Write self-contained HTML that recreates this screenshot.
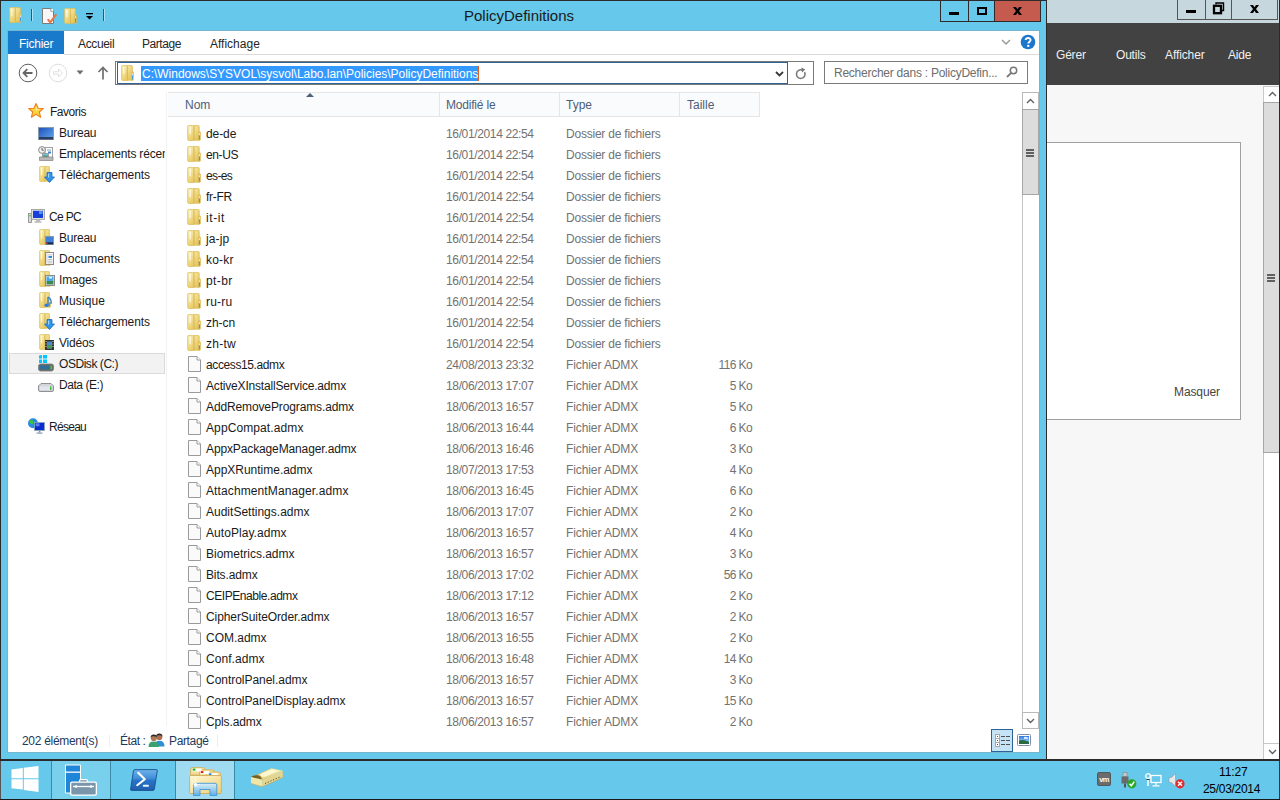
<!DOCTYPE html>
<html><head><meta charset="utf-8">
<style>
*{box-sizing:border-box}
html,body{margin:0;padding:0;width:1280px;height:800px;overflow:hidden;background:#66c8ea;font-family:"Liberation Sans",sans-serif;}
.a{position:absolute}
.ic{position:absolute;overflow:visible}
.t{position:absolute;white-space:nowrap;font-size:12px;line-height:14px}
.n{position:absolute;left:206px;white-space:nowrap;font-size:12px;line-height:14px;color:#1a1a1a;letter-spacing:-0.18px}
.d{position:absolute;left:446px;white-space:nowrap;font-size:12px;line-height:14px;color:#727272;letter-spacing:-0.36px}
.y{position:absolute;left:566px;white-space:nowrap;font-size:12px;line-height:14px;color:#727272;letter-spacing:-0.1px}
.s{position:absolute;right:528px;white-space:nowrap;font-size:12px;line-height:14px;color:#727272;letter-spacing:-0.6px;text-align:right}
.nv{position:absolute;white-space:nowrap;font-size:12px;line-height:14px;color:#1a1a1a;letter-spacing:-0.18px}
#scr{position:relative;width:1280px;height:800px;overflow:hidden}
</style></head><body><div id="scr">
<svg width="0" height="0" style="position:absolute">
<defs>
<linearGradient id="gfb" x1="0" y1="0" x2="0.6" y2="1"><stop offset="0" stop-color="#f8eaa4"/><stop offset="1" stop-color="#e6c45a"/></linearGradient>
<linearGradient id="gff" x1="0" y1="0" x2="0.5" y2="1"><stop offset="0" stop-color="#fcf4c4"/><stop offset="1" stop-color="#ebcd68"/></linearGradient>
<linearGradient id="gdesk" x1="0" y1="0" x2="1" y2="1"><stop offset="0" stop-color="#1d4fb8"/><stop offset="1" stop-color="#63a8f0"/></linearGradient>
</defs>
</svg>

<!-- Explorer window frame -->
<div class="a" style="left:0;top:0;width:1047px;height:761px;background:#66c8ea;border-left:1px solid #2a2a2a;border-top:1px solid #2a2a2a;border-right:1px solid #2a2a2a"></div>
<div class="a" style="left:7px;top:30px;width:1033px;height:723px;background:#fff;border:1px solid #74b6cc"></div>

<!-- quick access toolbar -->
<svg class="ic" style="left:9px;top:7px" width="13" height="16" viewBox="0 0 14 16" preserveAspectRatio="none">
 <path d="M6 0.6 H11.6 Q12.2 0.6 12.2 1.2 V15.2 H6 Z" fill="url(#gfb)" stroke="#dcbb58" stroke-width="0.8"/>
 <path d="M11.8 6.8 H13 Q13.5 6.8 13.5 7.3 V14.6 Q13.5 15.2 12.9 15.2 H11.8 Z" fill="#e8c860" stroke="#d9b550" stroke-width="0.6"/>
 <rect x="11.9" y="10.2" width="1" height="4.3" fill="#3a9ae8"/>
 <rect x="11.9" y="8.5" width="1" height="1.7" fill="#e8f0f8"/>
 <path d="M0.7 1.2 Q0.7 0.6 1.3 0.6 H5.5 Q6.8 0.6 6.8 1.8 V15.5 H2.2 Q0.7 15.5 0.7 14.2 Z" fill="url(#gff)" stroke="#dcbf5e" stroke-width="0.8"/>
 <path d="M2.6 1.6 L3.6 2.2 V9.2 L2.6 9.2 Z" fill="#fff"/>
 <rect x="6.6" y="1.4" width="1" height="13.5" fill="#cfb05a" opacity="0.55"/>
</svg>
<div class="a" style="left:31px;top:9px;width:1px;height:12px;background:#2d5a6c"></div>
<div class="a" style="left:32px;top:9px;width:1px;height:12px;background:#a8e2f5"></div>
<svg class="ic" style="left:42px;top:8px" width="16" height="16" viewBox="0 0 16 16">
 <path d="M0.5 0.5 H8.8 L11.5 3.2 V15.5 H0.5 Z" fill="#f7f7f7" stroke="#7a7a7a" stroke-width="1"/>
 <path d="M8.8 0.5 V3.2 H11.5" fill="#fff" stroke="#7a7a7a" stroke-width="0.8"/>
 <circle cx="10.2" cy="1.9" r="0.9" fill="#fff"/>
 <path d="M6.3 11.8 L8.3 14.3 L13.8 6.8" fill="none" stroke="#e8764a" stroke-width="2.1" stroke-linecap="round" stroke-linejoin="round"/>
</svg>
<svg class="ic" style="left:64px;top:8px" width="13" height="16" viewBox="0 0 14 16" preserveAspectRatio="none">
 <path d="M6 0.6 H11.6 Q12.2 0.6 12.2 1.2 V15.2 H6 Z" fill="url(#gfb)" stroke="#dcbb58" stroke-width="0.8"/>
 <path d="M11.8 6.8 H13 Q13.5 6.8 13.5 7.3 V14.6 Q13.5 15.2 12.9 15.2 H11.8 Z" fill="#e8c860" stroke="#d9b550" stroke-width="0.6"/>
 <rect x="11.9" y="10.2" width="1" height="4.3" fill="#3a9ae8"/>
 <rect x="11.9" y="8.5" width="1" height="1.7" fill="#e8f0f8"/>
 <path d="M0.7 1.2 Q0.7 0.6 1.3 0.6 H5.5 Q6.8 0.6 6.8 1.8 V15.5 H2.2 Q0.7 15.5 0.7 14.2 Z" fill="url(#gff)" stroke="#dcbf5e" stroke-width="0.8"/>
 <path d="M2.6 1.6 L3.6 2.2 V9.2 L2.6 9.2 Z" fill="#fff"/>
 <rect x="6.6" y="1.4" width="1" height="13.5" fill="#cfb05a" opacity="0.55"/>
</svg>
<svg class="ic" style="left:86px;top:13px" width="8" height="8" viewBox="0 0 8 8"><rect x="0" y="0" width="7" height="1.3" fill="#000"/><path d="M0 3 H7 L3.5 6.5 Z" fill="#000"/></svg>
<div class="a" style="left:103px;top:9px;width:1px;height:12px;background:#2d5a6c"></div>
<div class="a" style="left:104px;top:9px;width:1px;height:12px;background:#a8e2f5"></div>

<!-- title -->
<div class="t" style="left:464px;top:7px;font-size:15px;line-height:18px;color:#1a1a1a">PolicyDefinitions</div>

<!-- window buttons -->
<div class="a" style="left:940px;top:0;width:29px;height:22px;border:1px solid #2e2a2a;background:#66c8ea"></div>
<div class="a" style="left:949px;top:12px;width:10px;height:3px;background:#000"></div>
<div class="a" style="left:968px;top:0;width:27px;height:22px;border:1px solid #2e2a2a;background:#66c8ea"></div>
<div class="a" style="left:977px;top:7px;width:10px;height:8px;border:2px solid #000"></div>
<div class="a" style="left:994px;top:0;width:47px;height:22px;border:1px solid #2e2a2a;background:#c55a4f"></div>
<svg class="ic" style="left:1013px;top:7px" width="9" height="8" viewBox="0 0 9 8"><path d="M0 0 H3 L4.5 2.3 L6 0 H9 L6 4 L9 8 H6 L4.5 5.7 L3 8 H0 L3 4 Z" fill="#000"/></svg>

<!-- ribbon -->
<div class="a" style="left:8px;top:31px;width:56px;height:23px;background:#1979ca"></div>
<div class="t" style="left:19px;top:37px;color:#fff;letter-spacing:-0.25px">Fichier</div>
<div class="t" style="left:78px;top:37px;color:#262626;letter-spacing:-0.35px">Accueil</div>
<div class="t" style="left:142px;top:37px;color:#262626;letter-spacing:-0.45px">Partage</div>
<div class="t" style="left:210px;top:37px;color:#262626">Affichage</div>
<div class="a" style="left:64px;top:54px;width:975px;height:1px;background:#dadbdc"></div>
<svg class="ic" style="left:1001px;top:39px" width="10" height="6" viewBox="0 0 10 6"><path d="M1 1 L5 5 L9 1" fill="none" stroke="#9a9a9a" stroke-width="1.5"/></svg>
<svg class="ic" style="left:1020px;top:34px" width="16" height="16" viewBox="0 0 16 16"><circle cx="8" cy="8" r="7.3" fill="#1b76cc"/><path d="M5.6 6 C5.6 3.3 10.6 3.3 10.6 6 C10.6 7.6 8.3 7.8 8.3 9.6" fill="none" stroke="#fff" stroke-width="1.8"/><rect x="7.2" y="10.9" width="2.1" height="2" fill="#fff"/></svg>

<!-- nav buttons -->
<svg class="ic" style="left:18px;top:63px" width="20" height="20" viewBox="0 0 20 20"><circle cx="10" cy="10" r="8.8" fill="none" stroke="#606060" stroke-width="1"/><path d="M5.5 10 H14.5 M9.3 6.2 L5.5 10 L9.3 13.8" fill="none" stroke="#666" stroke-width="1.8"/></svg>
<svg class="ic" style="left:48px;top:63px" width="20" height="20" viewBox="0 0 20 20"><circle cx="10" cy="10" r="8.8" fill="none" stroke="#dedede" stroke-width="1"/><path d="M5.5 8.8 H10.5 V6 L14.5 10 L10.5 14 V11.2 H5.5 Z" fill="none" stroke="#dcdcdc" stroke-width="0.9"/></svg>
<svg class="ic" style="left:76px;top:70px" width="8" height="5" viewBox="0 0 8 5"><path d="M0.5 0.5 H7.5 L4 4.5 Z" fill="#6d6d6d"/></svg>
<svg class="ic" style="left:97px;top:66px" width="12" height="14" viewBox="0 0 12 14"><path d="M6 13.5 V1.5 M1.5 6 L6 1.5 L10.5 6" fill="none" stroke="#707070" stroke-width="1.7"/></svg>

<!-- address bar -->
<div class="a" style="left:115px;top:61px;width:699px;height:24px;border:1px solid #7a7a7a;background:#fff"></div>
<div class="a" style="left:117px;top:62px;width:671px;height:22px;border:1px solid #2e6493"></div>
<svg class="ic" style="left:121px;top:65px" width="13" height="16" viewBox="0 0 14 16" preserveAspectRatio="none">
 <path d="M6 0.6 H11.6 Q12.2 0.6 12.2 1.2 V15.2 H6 Z" fill="url(#gfb)" stroke="#dcbb58" stroke-width="0.8"/>
 <path d="M11.8 6.8 H13 Q13.5 6.8 13.5 7.3 V14.6 Q13.5 15.2 12.9 15.2 H11.8 Z" fill="#e8c860" stroke="#d9b550" stroke-width="0.6"/>
 <rect x="11.9" y="10.2" width="1" height="4.3" fill="#3a9ae8"/>
 <rect x="11.9" y="8.5" width="1" height="1.7" fill="#e8f0f8"/>
 <path d="M0.7 1.2 Q0.7 0.6 1.3 0.6 H5.5 Q6.8 0.6 6.8 1.8 V15.5 H2.2 Q0.7 15.5 0.7 14.2 Z" fill="url(#gff)" stroke="#dcbf5e" stroke-width="0.8"/>
 <path d="M2.6 1.6 L3.6 2.2 V9.2 L2.6 9.2 Z" fill="#fff"/>
 <rect x="6.6" y="1.4" width="1" height="13.5" fill="#cfb05a" opacity="0.55"/>
</svg>
<div class="a" style="left:141px;top:66px;width:338px;height:15px;background:#3399ff"></div>
<div class="t" style="left:142px;top:67px;color:#fff;letter-spacing:-0.02px">C:\Windows\SYSVOL\sysvol\Labo.lan\Policies\PolicyDefinitions</div>
<div class="a" style="left:478px;top:66px;width:1px;height:15px;background:#e06020"></div>
<svg class="ic" style="left:775px;top:71px" width="9" height="6" viewBox="0 0 9 6"><path d="M1 1 L4.5 4.5 L8 1" fill="none" stroke="#3a3a3a" stroke-width="1.8"/></svg>
<svg class="ic" style="left:795px;top:67px" width="12" height="13" viewBox="0 0 12 13"><path d="M9.6 5.2 A4.3 4.3 0 1 1 7.5 3.2" fill="none" stroke="#777" stroke-width="1.5"/><path d="M6.3 0.5 L10.3 2.6 L7 5.6 Z" fill="#777"/></svg>
<!-- search -->
<div class="a" style="left:824px;top:61px;width:204px;height:23px;border:1px solid #7a7a7a;background:#fff"></div>
<div class="t" style="left:834px;top:66px;color:#6d6d6d;letter-spacing:-0.25px">Rechercher dans : PolicyDefin...</div>
<svg class="ic" style="left:1006px;top:66px" width="12" height="12" viewBox="0 0 12 12"><circle cx="7.5" cy="4.5" r="3.2" fill="none" stroke="#777" stroke-width="1.5"/><path d="M5.2 6.8 L1 11" stroke="#777" stroke-width="1.8"/></svg>

<!-- file list header -->
<div class="a" style="left:168px;top:92px;width:592px;height:25px;background:#fafbfc;border-top:1px solid #e5e5e5;border-bottom:1px solid #e5e5e5;border-right:1px solid #e5e5e5"></div>
<div class="a" style="left:439px;top:93px;width:1px;height:23px;background:#e5e5e5"></div>
<div class="a" style="left:559px;top:93px;width:1px;height:23px;background:#e5e5e5"></div>
<div class="a" style="left:679px;top:93px;width:1px;height:23px;background:#e5e5e5"></div>
<svg class="ic" style="left:306px;top:93px" width="8" height="4" viewBox="0 0 8 4"><path d="M0 4 L4 0 L8 4 Z" fill="#4c607a"/></svg>
<div class="t" style="left:185px;top:98px;color:#4c607a">Nom</div>
<div class="t" style="left:446px;top:98px;color:#4c607a;letter-spacing:-0.2px">Modifié le</div>
<div class="t" style="left:566px;top:98px;color:#4c607a">Type</div>
<div class="t" style="left:687px;top:98px;color:#4c607a">Taille</div>

<!-- nav separator -->
<div class="a" style="left:166px;top:92px;width:1px;height:634px;background:#f2f2f2"></div>

<!-- file rows -->
<svg class="ic" style="left:187px;top:125px" width="14" height="16" viewBox="0 0 14 16" preserveAspectRatio="none">
 <path d="M6 0.6 H11.6 Q12.2 0.6 12.2 1.2 V15.2 H6 Z" fill="url(#gfb)" stroke="#dcbb58" stroke-width="0.8"/>
 <path d="M11.8 6.8 H13 Q13.5 6.8 13.5 7.3 V14.6 Q13.5 15.2 12.9 15.2 H11.8 Z" fill="#e8c860" stroke="#d9b550" stroke-width="0.6"/>
 <rect x="11.9" y="10.2" width="1" height="4.3" fill="#3a9ae8"/>
 <rect x="11.9" y="8.5" width="1" height="1.7" fill="#e8f0f8"/>
 <path d="M0.7 1.2 Q0.7 0.6 1.3 0.6 H5.5 Q6.8 0.6 6.8 1.8 V15.5 H2.2 Q0.7 15.5 0.7 14.2 Z" fill="url(#gff)" stroke="#dcbf5e" stroke-width="0.8"/>
 <path d="M2.6 1.6 L3.6 2.2 V9.2 L2.6 9.2 Z" fill="#fff"/>
 <rect x="6.6" y="1.4" width="1" height="13.5" fill="#cfb05a" opacity="0.55"/>
</svg><div class="n" style="top:127px;letter-spacing:-0.091px">de-de</div><div class="d" style="top:127px">16/01/2014 22:54</div><div class="y" style="top:127px;letter-spacing:-0.22px">Dossier de fichiers</div>
<svg class="ic" style="left:187px;top:146px" width="14" height="16" viewBox="0 0 14 16" preserveAspectRatio="none">
 <path d="M6 0.6 H11.6 Q12.2 0.6 12.2 1.2 V15.2 H6 Z" fill="url(#gfb)" stroke="#dcbb58" stroke-width="0.8"/>
 <path d="M11.8 6.8 H13 Q13.5 6.8 13.5 7.3 V14.6 Q13.5 15.2 12.9 15.2 H11.8 Z" fill="#e8c860" stroke="#d9b550" stroke-width="0.6"/>
 <rect x="11.9" y="10.2" width="1" height="4.3" fill="#3a9ae8"/>
 <rect x="11.9" y="8.5" width="1" height="1.7" fill="#e8f0f8"/>
 <path d="M0.7 1.2 Q0.7 0.6 1.3 0.6 H5.5 Q6.8 0.6 6.8 1.8 V15.5 H2.2 Q0.7 15.5 0.7 14.2 Z" fill="url(#gff)" stroke="#dcbf5e" stroke-width="0.8"/>
 <path d="M2.6 1.6 L3.6 2.2 V9.2 L2.6 9.2 Z" fill="#fff"/>
 <rect x="6.6" y="1.4" width="1" height="13.5" fill="#cfb05a" opacity="0.55"/>
</svg><div class="n" style="top:148px;letter-spacing:-0.383px">en-US</div><div class="d" style="top:148px">16/01/2014 22:54</div><div class="y" style="top:148px;letter-spacing:-0.22px">Dossier de fichiers</div>
<svg class="ic" style="left:187px;top:167px" width="14" height="16" viewBox="0 0 14 16" preserveAspectRatio="none">
 <path d="M6 0.6 H11.6 Q12.2 0.6 12.2 1.2 V15.2 H6 Z" fill="url(#gfb)" stroke="#dcbb58" stroke-width="0.8"/>
 <path d="M11.8 6.8 H13 Q13.5 6.8 13.5 7.3 V14.6 Q13.5 15.2 12.9 15.2 H11.8 Z" fill="#e8c860" stroke="#d9b550" stroke-width="0.6"/>
 <rect x="11.9" y="10.2" width="1" height="4.3" fill="#3a9ae8"/>
 <rect x="11.9" y="8.5" width="1" height="1.7" fill="#e8f0f8"/>
 <path d="M0.7 1.2 Q0.7 0.6 1.3 0.6 H5.5 Q6.8 0.6 6.8 1.8 V15.5 H2.2 Q0.7 15.5 0.7 14.2 Z" fill="url(#gff)" stroke="#dcbf5e" stroke-width="0.8"/>
 <path d="M2.6 1.6 L3.6 2.2 V9.2 L2.6 9.2 Z" fill="#fff"/>
 <rect x="6.6" y="1.4" width="1" height="13.5" fill="#cfb05a" opacity="0.55"/>
</svg><div class="n" style="top:169px;letter-spacing:-0.619px">es-es</div><div class="d" style="top:169px">16/01/2014 22:54</div><div class="y" style="top:169px;letter-spacing:-0.22px">Dossier de fichiers</div>
<svg class="ic" style="left:187px;top:188px" width="14" height="16" viewBox="0 0 14 16" preserveAspectRatio="none">
 <path d="M6 0.6 H11.6 Q12.2 0.6 12.2 1.2 V15.2 H6 Z" fill="url(#gfb)" stroke="#dcbb58" stroke-width="0.8"/>
 <path d="M11.8 6.8 H13 Q13.5 6.8 13.5 7.3 V14.6 Q13.5 15.2 12.9 15.2 H11.8 Z" fill="#e8c860" stroke="#d9b550" stroke-width="0.6"/>
 <rect x="11.9" y="10.2" width="1" height="4.3" fill="#3a9ae8"/>
 <rect x="11.9" y="8.5" width="1" height="1.7" fill="#e8f0f8"/>
 <path d="M0.7 1.2 Q0.7 0.6 1.3 0.6 H5.5 Q6.8 0.6 6.8 1.8 V15.5 H2.2 Q0.7 15.5 0.7 14.2 Z" fill="url(#gff)" stroke="#dcbf5e" stroke-width="0.8"/>
 <path d="M2.6 1.6 L3.6 2.2 V9.2 L2.6 9.2 Z" fill="#fff"/>
 <rect x="6.6" y="1.4" width="1" height="13.5" fill="#cfb05a" opacity="0.55"/>
</svg><div class="n" style="top:190px;letter-spacing:-0.286px">fr-FR</div><div class="d" style="top:190px">16/01/2014 22:54</div><div class="y" style="top:190px;letter-spacing:-0.22px">Dossier de fichiers</div>
<svg class="ic" style="left:187px;top:209px" width="14" height="16" viewBox="0 0 14 16" preserveAspectRatio="none">
 <path d="M6 0.6 H11.6 Q12.2 0.6 12.2 1.2 V15.2 H6 Z" fill="url(#gfb)" stroke="#dcbb58" stroke-width="0.8"/>
 <path d="M11.8 6.8 H13 Q13.5 6.8 13.5 7.3 V14.6 Q13.5 15.2 12.9 15.2 H11.8 Z" fill="#e8c860" stroke="#d9b550" stroke-width="0.6"/>
 <rect x="11.9" y="10.2" width="1" height="4.3" fill="#3a9ae8"/>
 <rect x="11.9" y="8.5" width="1" height="1.7" fill="#e8f0f8"/>
 <path d="M0.7 1.2 Q0.7 0.6 1.3 0.6 H5.5 Q6.8 0.6 6.8 1.8 V15.5 H2.2 Q0.7 15.5 0.7 14.2 Z" fill="url(#gff)" stroke="#dcbf5e" stroke-width="0.8"/>
 <path d="M2.6 1.6 L3.6 2.2 V9.2 L2.6 9.2 Z" fill="#fff"/>
 <rect x="6.6" y="1.4" width="1" height="13.5" fill="#cfb05a" opacity="0.55"/>
</svg><div class="n" style="top:211px;letter-spacing:0.6px">it-it</div><div class="d" style="top:211px">16/01/2014 22:54</div><div class="y" style="top:211px;letter-spacing:-0.22px">Dossier de fichiers</div>
<svg class="ic" style="left:187px;top:230px" width="14" height="16" viewBox="0 0 14 16" preserveAspectRatio="none">
 <path d="M6 0.6 H11.6 Q12.2 0.6 12.2 1.2 V15.2 H6 Z" fill="url(#gfb)" stroke="#dcbb58" stroke-width="0.8"/>
 <path d="M11.8 6.8 H13 Q13.5 6.8 13.5 7.3 V14.6 Q13.5 15.2 12.9 15.2 H11.8 Z" fill="#e8c860" stroke="#d9b550" stroke-width="0.6"/>
 <rect x="11.9" y="10.2" width="1" height="4.3" fill="#3a9ae8"/>
 <rect x="11.9" y="8.5" width="1" height="1.7" fill="#e8f0f8"/>
 <path d="M0.7 1.2 Q0.7 0.6 1.3 0.6 H5.5 Q6.8 0.6 6.8 1.8 V15.5 H2.2 Q0.7 15.5 0.7 14.2 Z" fill="url(#gff)" stroke="#dcbf5e" stroke-width="0.8"/>
 <path d="M2.6 1.6 L3.6 2.2 V9.2 L2.6 9.2 Z" fill="#fff"/>
 <rect x="6.6" y="1.4" width="1" height="13.5" fill="#cfb05a" opacity="0.55"/>
</svg><div class="n" style="top:232px;letter-spacing:0.102px">ja-jp</div><div class="d" style="top:232px">16/01/2014 22:54</div><div class="y" style="top:232px;letter-spacing:-0.22px">Dossier de fichiers</div>
<svg class="ic" style="left:187px;top:251px" width="14" height="16" viewBox="0 0 14 16" preserveAspectRatio="none">
 <path d="M6 0.6 H11.6 Q12.2 0.6 12.2 1.2 V15.2 H6 Z" fill="url(#gfb)" stroke="#dcbb58" stroke-width="0.8"/>
 <path d="M11.8 6.8 H13 Q13.5 6.8 13.5 7.3 V14.6 Q13.5 15.2 12.9 15.2 H11.8 Z" fill="#e8c860" stroke="#d9b550" stroke-width="0.6"/>
 <rect x="11.9" y="10.2" width="1" height="4.3" fill="#3a9ae8"/>
 <rect x="11.9" y="8.5" width="1" height="1.7" fill="#e8f0f8"/>
 <path d="M0.7 1.2 Q0.7 0.6 1.3 0.6 H5.5 Q6.8 0.6 6.8 1.8 V15.5 H2.2 Q0.7 15.5 0.7 14.2 Z" fill="url(#gff)" stroke="#dcbf5e" stroke-width="0.8"/>
 <path d="M2.6 1.6 L3.6 2.2 V9.2 L2.6 9.2 Z" fill="#fff"/>
 <rect x="6.6" y="1.4" width="1" height="13.5" fill="#cfb05a" opacity="0.55"/>
</svg><div class="n" style="top:253px;letter-spacing:0.186px">ko-kr</div><div class="d" style="top:253px">16/01/2014 22:54</div><div class="y" style="top:253px;letter-spacing:-0.22px">Dossier de fichiers</div>
<svg class="ic" style="left:187px;top:272px" width="14" height="16" viewBox="0 0 14 16" preserveAspectRatio="none">
 <path d="M6 0.6 H11.6 Q12.2 0.6 12.2 1.2 V15.2 H6 Z" fill="url(#gfb)" stroke="#dcbb58" stroke-width="0.8"/>
 <path d="M11.8 6.8 H13 Q13.5 6.8 13.5 7.3 V14.6 Q13.5 15.2 12.9 15.2 H11.8 Z" fill="#e8c860" stroke="#d9b550" stroke-width="0.6"/>
 <rect x="11.9" y="10.2" width="1" height="4.3" fill="#3a9ae8"/>
 <rect x="11.9" y="8.5" width="1" height="1.7" fill="#e8f0f8"/>
 <path d="M0.7 1.2 Q0.7 0.6 1.3 0.6 H5.5 Q6.8 0.6 6.8 1.8 V15.5 H2.2 Q0.7 15.5 0.7 14.2 Z" fill="url(#gff)" stroke="#dcbf5e" stroke-width="0.8"/>
 <path d="M2.6 1.6 L3.6 2.2 V9.2 L2.6 9.2 Z" fill="#fff"/>
 <rect x="6.6" y="1.4" width="1" height="13.5" fill="#cfb05a" opacity="0.55"/>
</svg><div class="n" style="top:274px;letter-spacing:0.423px">pt-br</div><div class="d" style="top:274px">16/01/2014 22:54</div><div class="y" style="top:274px;letter-spacing:-0.22px">Dossier de fichiers</div>
<svg class="ic" style="left:187px;top:293px" width="14" height="16" viewBox="0 0 14 16" preserveAspectRatio="none">
 <path d="M6 0.6 H11.6 Q12.2 0.6 12.2 1.2 V15.2 H6 Z" fill="url(#gfb)" stroke="#dcbb58" stroke-width="0.8"/>
 <path d="M11.8 6.8 H13 Q13.5 6.8 13.5 7.3 V14.6 Q13.5 15.2 12.9 15.2 H11.8 Z" fill="#e8c860" stroke="#d9b550" stroke-width="0.6"/>
 <rect x="11.9" y="10.2" width="1" height="4.3" fill="#3a9ae8"/>
 <rect x="11.9" y="8.5" width="1" height="1.7" fill="#e8f0f8"/>
 <path d="M0.7 1.2 Q0.7 0.6 1.3 0.6 H5.5 Q6.8 0.6 6.8 1.8 V15.5 H2.2 Q0.7 15.5 0.7 14.2 Z" fill="url(#gff)" stroke="#dcbf5e" stroke-width="0.8"/>
 <path d="M2.6 1.6 L3.6 2.2 V9.2 L2.6 9.2 Z" fill="#fff"/>
 <rect x="6.6" y="1.4" width="1" height="13.5" fill="#cfb05a" opacity="0.55"/>
</svg><div class="n" style="top:295px;letter-spacing:0.191px">ru-ru</div><div class="d" style="top:295px">16/01/2014 22:54</div><div class="y" style="top:295px;letter-spacing:-0.22px">Dossier de fichiers</div>
<svg class="ic" style="left:187px;top:314px" width="14" height="16" viewBox="0 0 14 16" preserveAspectRatio="none">
 <path d="M6 0.6 H11.6 Q12.2 0.6 12.2 1.2 V15.2 H6 Z" fill="url(#gfb)" stroke="#dcbb58" stroke-width="0.8"/>
 <path d="M11.8 6.8 H13 Q13.5 6.8 13.5 7.3 V14.6 Q13.5 15.2 12.9 15.2 H11.8 Z" fill="#e8c860" stroke="#d9b550" stroke-width="0.6"/>
 <rect x="11.9" y="10.2" width="1" height="4.3" fill="#3a9ae8"/>
 <rect x="11.9" y="8.5" width="1" height="1.7" fill="#e8f0f8"/>
 <path d="M0.7 1.2 Q0.7 0.6 1.3 0.6 H5.5 Q6.8 0.6 6.8 1.8 V15.5 H2.2 Q0.7 15.5 0.7 14.2 Z" fill="url(#gff)" stroke="#dcbf5e" stroke-width="0.8"/>
 <path d="M2.6 1.6 L3.6 2.2 V9.2 L2.6 9.2 Z" fill="#fff"/>
 <rect x="6.6" y="1.4" width="1" height="13.5" fill="#cfb05a" opacity="0.55"/>
</svg><div class="n" style="top:316px;letter-spacing:-0.029px">zh-cn</div><div class="d" style="top:316px">16/01/2014 22:54</div><div class="y" style="top:316px;letter-spacing:-0.22px">Dossier de fichiers</div>
<svg class="ic" style="left:187px;top:335px" width="14" height="16" viewBox="0 0 14 16" preserveAspectRatio="none">
 <path d="M6 0.6 H11.6 Q12.2 0.6 12.2 1.2 V15.2 H6 Z" fill="url(#gfb)" stroke="#dcbb58" stroke-width="0.8"/>
 <path d="M11.8 6.8 H13 Q13.5 6.8 13.5 7.3 V14.6 Q13.5 15.2 12.9 15.2 H11.8 Z" fill="#e8c860" stroke="#d9b550" stroke-width="0.6"/>
 <rect x="11.9" y="10.2" width="1" height="4.3" fill="#3a9ae8"/>
 <rect x="11.9" y="8.5" width="1" height="1.7" fill="#e8f0f8"/>
 <path d="M0.7 1.2 Q0.7 0.6 1.3 0.6 H5.5 Q6.8 0.6 6.8 1.8 V15.5 H2.2 Q0.7 15.5 0.7 14.2 Z" fill="url(#gff)" stroke="#dcbf5e" stroke-width="0.8"/>
 <path d="M2.6 1.6 L3.6 2.2 V9.2 L2.6 9.2 Z" fill="#fff"/>
 <rect x="6.6" y="1.4" width="1" height="13.5" fill="#cfb05a" opacity="0.55"/>
</svg><div class="n" style="top:337px;letter-spacing:0.246px">zh-tw</div><div class="d" style="top:337px">16/01/2014 22:54</div><div class="y" style="top:337px;letter-spacing:-0.22px">Dossier de fichiers</div>
<svg class="ic" style="left:188px;top:356px" width="13" height="16" viewBox="0 0 13 16" preserveAspectRatio="none">
 <path d="M0.5 0.5 H9 L12.5 4 V15.5 H0.5 Z" fill="#fafafa" stroke="#9a9a9a" stroke-width="1"/>
 <path d="M9 0.5 V4 H12.5" fill="#fff" stroke="#9a9a9a" stroke-width="1"/>
</svg><div class="n" style="top:358px;letter-spacing:-0.394px">access15.admx</div><div class="d" style="top:358px">24/08/2013 23:32</div><div class="y" style="top:358px">Fichier ADMX</div><div class="s" style="top:358px">116 Ko</div>
<svg class="ic" style="left:188px;top:377px" width="13" height="16" viewBox="0 0 13 16" preserveAspectRatio="none">
 <path d="M0.5 0.5 H9 L12.5 4 V15.5 H0.5 Z" fill="#fafafa" stroke="#9a9a9a" stroke-width="1"/>
 <path d="M9 0.5 V4 H12.5" fill="#fff" stroke="#9a9a9a" stroke-width="1"/>
</svg><div class="n" style="top:379px;letter-spacing:-0.182px">ActiveXInstallService.admx</div><div class="d" style="top:379px">18/06/2013 17:07</div><div class="y" style="top:379px">Fichier ADMX</div><div class="s" style="top:379px">5 Ko</div>
<svg class="ic" style="left:188px;top:398px" width="13" height="16" viewBox="0 0 13 16" preserveAspectRatio="none">
 <path d="M0.5 0.5 H9 L12.5 4 V15.5 H0.5 Z" fill="#fafafa" stroke="#9a9a9a" stroke-width="1"/>
 <path d="M9 0.5 V4 H12.5" fill="#fff" stroke="#9a9a9a" stroke-width="1"/>
</svg><div class="n" style="top:400px;letter-spacing:-0.124px">AddRemovePrograms.admx</div><div class="d" style="top:400px">18/06/2013 16:57</div><div class="y" style="top:400px">Fichier ADMX</div><div class="s" style="top:400px">5 Ko</div>
<svg class="ic" style="left:188px;top:419px" width="13" height="16" viewBox="0 0 13 16" preserveAspectRatio="none">
 <path d="M0.5 0.5 H9 L12.5 4 V15.5 H0.5 Z" fill="#fafafa" stroke="#9a9a9a" stroke-width="1"/>
 <path d="M9 0.5 V4 H12.5" fill="#fff" stroke="#9a9a9a" stroke-width="1"/>
</svg><div class="n" style="top:421px;letter-spacing:0.104px">AppCompat.admx</div><div class="d" style="top:421px">18/06/2013 16:44</div><div class="y" style="top:421px">Fichier ADMX</div><div class="s" style="top:421px">6 Ko</div>
<svg class="ic" style="left:188px;top:440px" width="13" height="16" viewBox="0 0 13 16" preserveAspectRatio="none">
 <path d="M0.5 0.5 H9 L12.5 4 V15.5 H0.5 Z" fill="#fafafa" stroke="#9a9a9a" stroke-width="1"/>
 <path d="M9 0.5 V4 H12.5" fill="#fff" stroke="#9a9a9a" stroke-width="1"/>
</svg><div class="n" style="top:442px;letter-spacing:-0.128px">AppxPackageManager.admx</div><div class="d" style="top:442px">18/06/2013 16:46</div><div class="y" style="top:442px">Fichier ADMX</div><div class="s" style="top:442px">3 Ko</div>
<svg class="ic" style="left:188px;top:461px" width="13" height="16" viewBox="0 0 13 16" preserveAspectRatio="none">
 <path d="M0.5 0.5 H9 L12.5 4 V15.5 H0.5 Z" fill="#fafafa" stroke="#9a9a9a" stroke-width="1"/>
 <path d="M9 0.5 V4 H12.5" fill="#fff" stroke="#9a9a9a" stroke-width="1"/>
</svg><div class="n" style="top:463px;letter-spacing:-0.014px">AppXRuntime.admx</div><div class="d" style="top:463px">18/07/2013 17:53</div><div class="y" style="top:463px">Fichier ADMX</div><div class="s" style="top:463px">4 Ko</div>
<svg class="ic" style="left:188px;top:482px" width="13" height="16" viewBox="0 0 13 16" preserveAspectRatio="none">
 <path d="M0.5 0.5 H9 L12.5 4 V15.5 H0.5 Z" fill="#fafafa" stroke="#9a9a9a" stroke-width="1"/>
 <path d="M9 0.5 V4 H12.5" fill="#fff" stroke="#9a9a9a" stroke-width="1"/>
</svg><div class="n" style="top:484px;letter-spacing:0.11px">AttachmentManager.admx</div><div class="d" style="top:484px">18/06/2013 16:45</div><div class="y" style="top:484px">Fichier ADMX</div><div class="s" style="top:484px">6 Ko</div>
<svg class="ic" style="left:188px;top:503px" width="13" height="16" viewBox="0 0 13 16" preserveAspectRatio="none">
 <path d="M0.5 0.5 H9 L12.5 4 V15.5 H0.5 Z" fill="#fafafa" stroke="#9a9a9a" stroke-width="1"/>
 <path d="M9 0.5 V4 H12.5" fill="#fff" stroke="#9a9a9a" stroke-width="1"/>
</svg><div class="n" style="top:505px;letter-spacing:0.006px">AuditSettings.admx</div><div class="d" style="top:505px">18/06/2013 17:07</div><div class="y" style="top:505px">Fichier ADMX</div><div class="s" style="top:505px">2 Ko</div>
<svg class="ic" style="left:188px;top:524px" width="13" height="16" viewBox="0 0 13 16" preserveAspectRatio="none">
 <path d="M0.5 0.5 H9 L12.5 4 V15.5 H0.5 Z" fill="#fafafa" stroke="#9a9a9a" stroke-width="1"/>
 <path d="M9 0.5 V4 H12.5" fill="#fff" stroke="#9a9a9a" stroke-width="1"/>
</svg><div class="n" style="top:526px;letter-spacing:0.052px">AutoPlay.admx</div><div class="d" style="top:526px">18/06/2013 16:57</div><div class="y" style="top:526px">Fichier ADMX</div><div class="s" style="top:526px">4 Ko</div>
<svg class="ic" style="left:188px;top:545px" width="13" height="16" viewBox="0 0 13 16" preserveAspectRatio="none">
 <path d="M0.5 0.5 H9 L12.5 4 V15.5 H0.5 Z" fill="#fafafa" stroke="#9a9a9a" stroke-width="1"/>
 <path d="M9 0.5 V4 H12.5" fill="#fff" stroke="#9a9a9a" stroke-width="1"/>
</svg><div class="n" style="top:547px;letter-spacing:-0.013px">Biometrics.admx</div><div class="d" style="top:547px">18/06/2013 16:57</div><div class="y" style="top:547px">Fichier ADMX</div><div class="s" style="top:547px">3 Ko</div>
<svg class="ic" style="left:188px;top:566px" width="13" height="16" viewBox="0 0 13 16" preserveAspectRatio="none">
 <path d="M0.5 0.5 H9 L12.5 4 V15.5 H0.5 Z" fill="#fafafa" stroke="#9a9a9a" stroke-width="1"/>
 <path d="M9 0.5 V4 H12.5" fill="#fff" stroke="#9a9a9a" stroke-width="1"/>
</svg><div class="n" style="top:568px;letter-spacing:-0.132px">Bits.admx</div><div class="d" style="top:568px">18/06/2013 17:02</div><div class="y" style="top:568px">Fichier ADMX</div><div class="s" style="top:568px">56 Ko</div>
<svg class="ic" style="left:188px;top:587px" width="13" height="16" viewBox="0 0 13 16" preserveAspectRatio="none">
 <path d="M0.5 0.5 H9 L12.5 4 V15.5 H0.5 Z" fill="#fafafa" stroke="#9a9a9a" stroke-width="1"/>
 <path d="M9 0.5 V4 H12.5" fill="#fff" stroke="#9a9a9a" stroke-width="1"/>
</svg><div class="n" style="top:589px;letter-spacing:-0.438px">CEIPEnable.admx</div><div class="d" style="top:589px">18/06/2013 17:12</div><div class="y" style="top:589px">Fichier ADMX</div><div class="s" style="top:589px">2 Ko</div>
<svg class="ic" style="left:188px;top:608px" width="13" height="16" viewBox="0 0 13 16" preserveAspectRatio="none">
 <path d="M0.5 0.5 H9 L12.5 4 V15.5 H0.5 Z" fill="#fafafa" stroke="#9a9a9a" stroke-width="1"/>
 <path d="M9 0.5 V4 H12.5" fill="#fff" stroke="#9a9a9a" stroke-width="1"/>
</svg><div class="n" style="top:610px;letter-spacing:-0.09px">CipherSuiteOrder.admx</div><div class="d" style="top:610px">18/06/2013 16:57</div><div class="y" style="top:610px">Fichier ADMX</div><div class="s" style="top:610px">2 Ko</div>
<svg class="ic" style="left:188px;top:629px" width="13" height="16" viewBox="0 0 13 16" preserveAspectRatio="none">
 <path d="M0.5 0.5 H9 L12.5 4 V15.5 H0.5 Z" fill="#fafafa" stroke="#9a9a9a" stroke-width="1"/>
 <path d="M9 0.5 V4 H12.5" fill="#fff" stroke="#9a9a9a" stroke-width="1"/>
</svg><div class="n" style="top:631px;letter-spacing:-0.023px">COM.admx</div><div class="d" style="top:631px">18/06/2013 16:55</div><div class="y" style="top:631px">Fichier ADMX</div><div class="s" style="top:631px">2 Ko</div>
<svg class="ic" style="left:188px;top:650px" width="13" height="16" viewBox="0 0 13 16" preserveAspectRatio="none">
 <path d="M0.5 0.5 H9 L12.5 4 V15.5 H0.5 Z" fill="#fafafa" stroke="#9a9a9a" stroke-width="1"/>
 <path d="M9 0.5 V4 H12.5" fill="#fff" stroke="#9a9a9a" stroke-width="1"/>
</svg><div class="n" style="top:652px;letter-spacing:0.052px">Conf.admx</div><div class="d" style="top:652px">18/06/2013 16:48</div><div class="y" style="top:652px">Fichier ADMX</div><div class="s" style="top:652px">14 Ko</div>
<svg class="ic" style="left:188px;top:671px" width="13" height="16" viewBox="0 0 13 16" preserveAspectRatio="none">
 <path d="M0.5 0.5 H9 L12.5 4 V15.5 H0.5 Z" fill="#fafafa" stroke="#9a9a9a" stroke-width="1"/>
 <path d="M9 0.5 V4 H12.5" fill="#fff" stroke="#9a9a9a" stroke-width="1"/>
</svg><div class="n" style="top:673px;letter-spacing:-0.033px">ControlPanel.admx</div><div class="d" style="top:673px">18/06/2013 16:57</div><div class="y" style="top:673px">Fichier ADMX</div><div class="s" style="top:673px">3 Ko</div>
<svg class="ic" style="left:188px;top:692px" width="13" height="16" viewBox="0 0 13 16" preserveAspectRatio="none">
 <path d="M0.5 0.5 H9 L12.5 4 V15.5 H0.5 Z" fill="#fafafa" stroke="#9a9a9a" stroke-width="1"/>
 <path d="M9 0.5 V4 H12.5" fill="#fff" stroke="#9a9a9a" stroke-width="1"/>
</svg><div class="n" style="top:694px;letter-spacing:-0.042px">ControlPanelDisplay.admx</div><div class="d" style="top:694px">18/06/2013 16:57</div><div class="y" style="top:694px">Fichier ADMX</div><div class="s" style="top:694px">15 Ko</div>
<svg class="ic" style="left:188px;top:713px" width="13" height="16" viewBox="0 0 13 16" preserveAspectRatio="none">
 <path d="M0.5 0.5 H9 L12.5 4 V15.5 H0.5 Z" fill="#fafafa" stroke="#9a9a9a" stroke-width="1"/>
 <path d="M9 0.5 V4 H12.5" fill="#fff" stroke="#9a9a9a" stroke-width="1"/>
</svg><div class="n" style="top:715px;letter-spacing:-0.132px">Cpls.admx</div><div class="d" style="top:715px">18/06/2013 16:57</div><div class="y" style="top:715px">Fichier ADMX</div><div class="s" style="top:715px">2 Ko</div>

<!-- nav pane -->
<svg class="ic" style="left:28px;top:103px" width="16" height="15" viewBox="0 0 16 15" preserveAspectRatio="none">
 <path d="M8 0.5 L10.1 5.2 L15.3 5.6 L11.3 9 L12.6 14.2 L8 11.4 L3.4 14.2 L4.7 9 L0.7 5.6 L5.9 5.2 Z" fill="#fcd23c" stroke="#ee7d1e" stroke-width="1.1" stroke-linejoin="round"/>
 <path d="M8 3 L9.3 6.3 L12.5 6.6 L8 8 Z" fill="#fff5b0" opacity="0.7"/>
</svg>
<div class="nv" style="left:50px;top:105px;letter-spacing:-0.48px">Favoris</div>
<svg class="ic" style="left:38px;top:127px" width="16" height="13" viewBox="0 0 16 13" preserveAspectRatio="none">
 <rect x="0.5" y="0.5" width="15" height="12" fill="url(#gdesk)" stroke="#8a9cb4" stroke-width="1"/>
 <rect x="1" y="10" width="14" height="2.5" fill="#2c3e5c"/>
</svg>
<div class="nv" style="left:59px;top:126px;letter-spacing:-0.24px">Bureau</div>
<svg class="ic" style="left:38px;top:146px" width="16" height="15" viewBox="0 0 16 15">
 <rect x="7" y="1.5" width="7.5" height="10" fill="#fff" stroke="#a0a0a0" stroke-width="1"/>
 <rect x="9" y="3.5" width="4" height="1" fill="#8aa"/><rect x="10" y="5.5" width="3" height="2" fill="#3b82d8"/>
 <rect x="4.5" y="7.5" width="6" height="4" fill="#4a9a5a" stroke="#999" stroke-width="0.8"/><rect x="5" y="8" width="5" height="1.5" fill="#6cc0f0"/>
 <path d="M1.5 11 H15 V14.5 H1.5 Z" fill="#b8b8b8" stroke="#8c8c8c" stroke-width="0.8"/>
 <circle cx="4" cy="4" r="3.4" fill="#f0f0f0" stroke="#8a8a8a" stroke-width="1"/>
 <path d="M4 2 V4.2 H5.8" fill="none" stroke="#444" stroke-width="0.8"/>
</svg>
<div class="nv" style="left:59px;top:147px;width:106px;overflow:hidden">Emplacements récents</div>
<svg class="ic" style="left:39px;top:166px" width="12" height="16" viewBox="0 0 14 16" preserveAspectRatio="none">
 <path d="M6 0.6 H11.6 Q12.2 0.6 12.2 1.2 V15.2 H6 Z" fill="url(#gfb)" stroke="#dcbb58" stroke-width="0.8"/>
 <path d="M11.8 6.8 H13 Q13.5 6.8 13.5 7.3 V14.6 Q13.5 15.2 12.9 15.2 H11.8 Z" fill="#e8c860" stroke="#d9b550" stroke-width="0.6"/>
 <rect x="11.9" y="10.2" width="1" height="4.3" fill="#3a9ae8"/>
 <rect x="11.9" y="8.5" width="1" height="1.7" fill="#e8f0f8"/>
 <path d="M0.7 1.2 Q0.7 0.6 1.3 0.6 H5.5 Q6.8 0.6 6.8 1.8 V15.5 H2.2 Q0.7 15.5 0.7 14.2 Z" fill="url(#gff)" stroke="#dcbf5e" stroke-width="0.8"/>
 <path d="M2.6 1.6 L3.6 2.2 V9.2 L2.6 9.2 Z" fill="#fff"/>
 <rect x="6.6" y="1.4" width="1" height="13.5" fill="#cfb05a" opacity="0.55"/>
</svg>
<svg class="ic" style="left:44px;top:172px" width="11" height="11" viewBox="0 0 11 11"><path d="M3 0.5 H8 V5 H10.5 L5.5 10.5 L0.5 5 H3 Z" fill="#2f95e8" stroke="#1a6cc4" stroke-width="0.8"/><rect x="4" y="1.5" width="1.2" height="4" fill="#9fd4ff"/></svg>
<div class="nv" style="left:59px;top:168px;letter-spacing:-0.13px">Téléchargements</div>

<svg class="ic" style="left:28px;top:209px" width="17" height="14" viewBox="0 0 17 14">
 <rect x="0.5" y="4.5" width="3" height="9" fill="#d8d8d8" stroke="#888" stroke-width="0.8"/><rect x="1.3" y="6" width="1.4" height="1.4" fill="#3c3"/>
 <rect x="3.5" y="0.5" width="13" height="10" fill="#e0e0e0" stroke="#999" stroke-width="0.8"/>
 <rect x="5" y="1.8" width="10" height="7.2" fill="#1640d8"/><rect x="11" y="2" width="3.5" height="3" fill="#5a8ef0"/>
 <path d="M8.5 10.5 H11.5 L12.5 12.5 H7.5 Z" fill="#bbb"/><rect x="6.5" y="12.5" width="7" height="1" fill="#999"/>
</svg>
<div class="nv" style="left:49px;top:210px;letter-spacing:-0.67px">Ce PC</div>

<svg class="ic" style="left:39px;top:229px" width="12" height="16" viewBox="0 0 14 16" preserveAspectRatio="none">
 <path d="M6 0.6 H11.6 Q12.2 0.6 12.2 1.2 V15.2 H6 Z" fill="url(#gfb)" stroke="#dcbb58" stroke-width="0.8"/>
 <path d="M11.8 6.8 H13 Q13.5 6.8 13.5 7.3 V14.6 Q13.5 15.2 12.9 15.2 H11.8 Z" fill="#e8c860" stroke="#d9b550" stroke-width="0.6"/>
 <rect x="11.9" y="10.2" width="1" height="4.3" fill="#3a9ae8"/>
 <rect x="11.9" y="8.5" width="1" height="1.7" fill="#e8f0f8"/>
 <path d="M0.7 1.2 Q0.7 0.6 1.3 0.6 H5.5 Q6.8 0.6 6.8 1.8 V15.5 H2.2 Q0.7 15.5 0.7 14.2 Z" fill="url(#gff)" stroke="#dcbf5e" stroke-width="0.8"/>
 <path d="M2.6 1.6 L3.6 2.2 V9.2 L2.6 9.2 Z" fill="#fff"/>
 <rect x="6.6" y="1.4" width="1" height="13.5" fill="#cfb05a" opacity="0.55"/>
</svg>
<svg class="ic" style="left:45px;top:236px" width="9" height="9" viewBox="0 0 9 9"><rect x="0.4" y="0.4" width="8.2" height="8.2" fill="#3f7fd8" stroke="#7a9ab8" stroke-width="0.8"/><rect x="1" y="6.3" width="7" height="2" fill="#1c2a40"/><rect x="1.2" y="6.5" width="1.5" height="1.5" fill="#e03a2a"/></svg>
<div class="nv" style="left:59px;top:231px;letter-spacing:-0.24px">Bureau</div>

<svg class="ic" style="left:39px;top:250px" width="12" height="16" viewBox="0 0 14 16" preserveAspectRatio="none">
 <path d="M6 0.6 H11.6 Q12.2 0.6 12.2 1.2 V15.2 H6 Z" fill="url(#gfb)" stroke="#dcbb58" stroke-width="0.8"/>
 <path d="M11.8 6.8 H13 Q13.5 6.8 13.5 7.3 V14.6 Q13.5 15.2 12.9 15.2 H11.8 Z" fill="#e8c860" stroke="#d9b550" stroke-width="0.6"/>
 <rect x="11.9" y="10.2" width="1" height="4.3" fill="#3a9ae8"/>
 <rect x="11.9" y="8.5" width="1" height="1.7" fill="#e8f0f8"/>
 <path d="M0.7 1.2 Q0.7 0.6 1.3 0.6 H5.5 Q6.8 0.6 6.8 1.8 V15.5 H2.2 Q0.7 15.5 0.7 14.2 Z" fill="url(#gff)" stroke="#dcbf5e" stroke-width="0.8"/>
 <path d="M2.6 1.6 L3.6 2.2 V9.2 L2.6 9.2 Z" fill="#fff"/>
 <rect x="6.6" y="1.4" width="1" height="13.5" fill="#cfb05a" opacity="0.55"/>
</svg>
<svg class="ic" style="left:45px;top:252px" width="9" height="13" viewBox="0 0 9 13"><rect x="0.5" y="0.5" width="8" height="12" fill="#fff" stroke="#8a8a8a" stroke-width="1"/><rect x="1.5" y="1.5" width="1" height="10" fill="#c8c8c8"/><rect x="3" y="2.5" width="4.5" height="0.8" fill="#b0b0b0"/><rect x="3.5" y="4" width="3.5" height="2" fill="#2f8ae0"/><rect x="3" y="7" width="4.5" height="0.8" fill="#b0b0b0"/><rect x="3" y="8.8" width="4.5" height="0.8" fill="#b0b0b0"/><rect x="3" y="10.5" width="4.5" height="0.8" fill="#b0b0b0"/></svg>
<div class="nv" style="left:59px;top:252px;letter-spacing:0.03px">Documents</div>

<svg class="ic" style="left:39px;top:271px" width="12" height="16" viewBox="0 0 14 16" preserveAspectRatio="none">
 <path d="M6 0.6 H11.6 Q12.2 0.6 12.2 1.2 V15.2 H6 Z" fill="url(#gfb)" stroke="#dcbb58" stroke-width="0.8"/>
 <path d="M11.8 6.8 H13 Q13.5 6.8 13.5 7.3 V14.6 Q13.5 15.2 12.9 15.2 H11.8 Z" fill="#e8c860" stroke="#d9b550" stroke-width="0.6"/>
 <rect x="11.9" y="10.2" width="1" height="4.3" fill="#3a9ae8"/>
 <rect x="11.9" y="8.5" width="1" height="1.7" fill="#e8f0f8"/>
 <path d="M0.7 1.2 Q0.7 0.6 1.3 0.6 H5.5 Q6.8 0.6 6.8 1.8 V15.5 H2.2 Q0.7 15.5 0.7 14.2 Z" fill="url(#gff)" stroke="#dcbf5e" stroke-width="0.8"/>
 <path d="M2.6 1.6 L3.6 2.2 V9.2 L2.6 9.2 Z" fill="#fff"/>
 <rect x="6.6" y="1.4" width="1" height="13.5" fill="#cfb05a" opacity="0.55"/>
</svg>
<svg class="ic" style="left:45px;top:275px" width="10" height="11" viewBox="0 0 10 11"><rect x="0.5" y="0.5" width="9" height="10" fill="#f0f0f0" stroke="#8a8a8a" stroke-width="1"/><rect x="1.5" y="1.5" width="7" height="4.5" fill="#4aa8e8"/><rect x="4" y="2" width="3" height="1.5" fill="#e8f6ff"/><rect x="1.5" y="6" width="7" height="3.5" fill="#3c8a52"/></svg>
<div class="nv" style="left:59px;top:273px;letter-spacing:-0.18px">Images</div>

<svg class="ic" style="left:39px;top:292px" width="12" height="16" viewBox="0 0 14 16" preserveAspectRatio="none">
 <path d="M6 0.6 H11.6 Q12.2 0.6 12.2 1.2 V15.2 H6 Z" fill="url(#gfb)" stroke="#dcbb58" stroke-width="0.8"/>
 <path d="M11.8 6.8 H13 Q13.5 6.8 13.5 7.3 V14.6 Q13.5 15.2 12.9 15.2 H11.8 Z" fill="#e8c860" stroke="#d9b550" stroke-width="0.6"/>
 <rect x="11.9" y="10.2" width="1" height="4.3" fill="#3a9ae8"/>
 <rect x="11.9" y="8.5" width="1" height="1.7" fill="#e8f0f8"/>
 <path d="M0.7 1.2 Q0.7 0.6 1.3 0.6 H5.5 Q6.8 0.6 6.8 1.8 V15.5 H2.2 Q0.7 15.5 0.7 14.2 Z" fill="url(#gff)" stroke="#dcbf5e" stroke-width="0.8"/>
 <path d="M2.6 1.6 L3.6 2.2 V9.2 L2.6 9.2 Z" fill="#fff"/>
 <rect x="6.6" y="1.4" width="1" height="13.5" fill="#cfb05a" opacity="0.55"/>
</svg>
<svg class="ic" style="left:44px;top:296px" width="9" height="12" viewBox="0 0 9 12"><path d="M4 1 L4 9" stroke="#2a7fd8" stroke-width="1.3"/><path d="M4 1 Q8 3 7 8" fill="none" stroke="#2a7fd8" stroke-width="1.2"/><ellipse cx="2.6" cy="9.3" rx="2.2" ry="1.8" fill="#2a7fd8"/></svg>
<div class="nv" style="left:59px;top:294px;letter-spacing:0.09px">Musique</div>

<svg class="ic" style="left:39px;top:313px" width="12" height="16" viewBox="0 0 14 16" preserveAspectRatio="none">
 <path d="M6 0.6 H11.6 Q12.2 0.6 12.2 1.2 V15.2 H6 Z" fill="url(#gfb)" stroke="#dcbb58" stroke-width="0.8"/>
 <path d="M11.8 6.8 H13 Q13.5 6.8 13.5 7.3 V14.6 Q13.5 15.2 12.9 15.2 H11.8 Z" fill="#e8c860" stroke="#d9b550" stroke-width="0.6"/>
 <rect x="11.9" y="10.2" width="1" height="4.3" fill="#3a9ae8"/>
 <rect x="11.9" y="8.5" width="1" height="1.7" fill="#e8f0f8"/>
 <path d="M0.7 1.2 Q0.7 0.6 1.3 0.6 H5.5 Q6.8 0.6 6.8 1.8 V15.5 H2.2 Q0.7 15.5 0.7 14.2 Z" fill="url(#gff)" stroke="#dcbf5e" stroke-width="0.8"/>
 <path d="M2.6 1.6 L3.6 2.2 V9.2 L2.6 9.2 Z" fill="#fff"/>
 <rect x="6.6" y="1.4" width="1" height="13.5" fill="#cfb05a" opacity="0.55"/>
</svg>
<svg class="ic" style="left:44px;top:319px" width="11" height="11" viewBox="0 0 11 11"><path d="M3 0.5 H8 V5 H10.5 L5.5 10.5 L0.5 5 H3 Z" fill="#2f95e8" stroke="#1a6cc4" stroke-width="0.8"/><rect x="4" y="1.5" width="1.2" height="4" fill="#9fd4ff"/></svg>
<div class="nv" style="left:59px;top:315px;letter-spacing:-0.13px">Téléchargements</div>

<svg class="ic" style="left:39px;top:334px" width="12" height="16" viewBox="0 0 14 16" preserveAspectRatio="none">
 <path d="M6 0.6 H11.6 Q12.2 0.6 12.2 1.2 V15.2 H6 Z" fill="url(#gfb)" stroke="#dcbb58" stroke-width="0.8"/>
 <path d="M11.8 6.8 H13 Q13.5 6.8 13.5 7.3 V14.6 Q13.5 15.2 12.9 15.2 H11.8 Z" fill="#e8c860" stroke="#d9b550" stroke-width="0.6"/>
 <rect x="11.9" y="10.2" width="1" height="4.3" fill="#3a9ae8"/>
 <rect x="11.9" y="8.5" width="1" height="1.7" fill="#e8f0f8"/>
 <path d="M0.7 1.2 Q0.7 0.6 1.3 0.6 H5.5 Q6.8 0.6 6.8 1.8 V15.5 H2.2 Q0.7 15.5 0.7 14.2 Z" fill="url(#gff)" stroke="#dcbf5e" stroke-width="0.8"/>
 <path d="M2.6 1.6 L3.6 2.2 V9.2 L2.6 9.2 Z" fill="#fff"/>
 <rect x="6.6" y="1.4" width="1" height="13.5" fill="#cfb05a" opacity="0.55"/>
</svg>
<svg class="ic" style="left:45px;top:340px" width="9" height="10" viewBox="0 0 9 10"><rect x="0" y="0" width="9" height="10" fill="#333"/><rect x="2" y="1.5" width="5" height="7" fill="#4a8ac8"/><rect x="2" y="5" width="5" height="3.5" fill="#4a9a5a"/><rect x="0.5" y="1" width="1" height="1" fill="#ddd"/><rect x="0.5" y="3.5" width="1" height="1" fill="#ddd"/><rect x="0.5" y="6" width="1" height="1" fill="#ddd"/><rect x="7.5" y="1" width="1" height="1" fill="#ddd"/><rect x="7.5" y="3.5" width="1" height="1" fill="#ddd"/><rect x="7.5" y="6" width="1" height="1" fill="#ddd"/></svg>
<div class="nv" style="left:59px;top:336px;letter-spacing:-0.2px">Vidéos</div>

<div class="a" style="left:9px;top:353px;width:156px;height:21px;background:#f2f2f2;border:1px solid #dadada"></div>
<svg class="ic" style="left:38px;top:354px" width="16" height="18" viewBox="0 0 16 18">
 <path d="M1 1.5 L4 1 V4.5 H1 Z M5 1 H9 V4.5 H5 Z M1 5.5 H4 V9 H1 Z M5 5.5 H9 V9 H5 Z" fill="#00c8ff"/>
 <rect x="0.5" y="10" width="15" height="7" rx="2" fill="#6a6a6a" stroke="#7a7a7a" stroke-width="0.8"/>
 <rect x="2" y="11.5" width="10" height="4" fill="#2f6e96"/><rect x="12.5" y="11.8" width="1.3" height="3.5" fill="#3ddc3d"/>
</svg>
<div class="nv" style="left:59px;top:357px;letter-spacing:-0.45px">OSDisk (C:)</div>

<svg class="ic" style="left:38px;top:383px" width="16" height="9" viewBox="0 0 16 9">
 <path d="M3 0.5 H13 L15.5 3 V7 Q15.5 8.5 14 8.5 H2 Q0.5 8.5 0.5 7 V3 Z" fill="#d4d4dc" stroke="#7a7a7a" stroke-width="0.8"/>
 <rect x="2" y="3.5" width="10" height="3.5" fill="#e4e4ee"/><rect x="12" y="3.5" width="1.4" height="3.5" fill="#3ac03a"/>
</svg>
<div class="nv" style="left:59px;top:378px;letter-spacing:-0.45px">Data (E:)</div>

<svg class="ic" style="left:28px;top:418px" width="17" height="16" viewBox="0 0 17 16">
 <circle cx="5" cy="5.3" r="5" fill="#2a8ae8"/><path d="M1.5 3 Q3 1 5 2 Q4 4 6 4.5 Q5 7 3 6 Q1.5 5 1.5 3Z M6.5 7 Q8 6 9.5 7.5 Q8 9.5 6.5 9Z" fill="#38c838"/>
 <rect x="6.5" y="4.5" width="10" height="8" fill="#0a2ccc" stroke="#8ab" stroke-width="0.8"/><rect x="7.5" y="5.3" width="4" height="3" fill="#5a7ef0"/>
 <rect x="10.8" y="12.5" width="1.6" height="2.2" fill="#8a9ab0"/><rect x="8.5" y="14.5" width="6" height="1.2" fill="#8a9ab0"/>
</svg>
<div class="nv" style="left:49px;top:420px;letter-spacing:-0.72px">Réseau</div>


<!-- scrollbar -->
<div class="a" style="left:1022px;top:92px;width:17px;height:637px;border-left:1px solid #c4c4c4;background:#fff"></div>
<div class="a" style="left:1022px;top:92px;width:17px;height:18px;border:1px solid #b9b9b9;background:#fff"></div>
<svg class="ic" style="left:1026px;top:98px" width="9" height="6" viewBox="0 0 9 6"><path d="M1 5 L4.5 1.5 L8 5" fill="none" stroke="#606060" stroke-width="1.4"/></svg>
<div class="a" style="left:1022px;top:109px;width:17px;height:86px;border:1px solid #a6a6a6;background:#dcdcdc"></div>
<div class="a" style="left:1026px;top:149px;width:8px;height:1.6px;background:#606060"></div>
<div class="a" style="left:1026px;top:152px;width:8px;height:1.6px;background:#606060"></div>
<div class="a" style="left:1026px;top:155px;width:8px;height:1.6px;background:#606060"></div>
<div class="a" style="left:1022px;top:712px;width:17px;height:17px;border:1px solid #b9b9b9;background:#fff"></div>
<svg class="ic" style="left:1026px;top:718px" width="9" height="6" viewBox="0 0 9 6"><path d="M1 1 L4.5 4.5 L8 1" fill="none" stroke="#606060" stroke-width="1.4"/></svg>

<!-- status -->
<div class="t" style="left:22px;top:734px;color:#1e395b;letter-spacing:-0.3px">202 élément(s)</div>
<div class="a" style="left:109px;top:735px;width:1px;height:12px;background:#eeeeee"></div>
<div class="t" style="left:120px;top:734px;color:#1e395b;letter-spacing:-0.45px">État :</div>
<div class="t" style="left:169px;top:734px;color:#1e395b;letter-spacing:-0.35px">Partagé</div>
<div class="a" style="left:217px;top:735px;width:1px;height:12px;background:#eeeeee"></div>
<svg class="ic" style="left:148px;top:733px" width="17" height="14" viewBox="0 0 17 14">
 <path d="M6.5 13.5 Q6.5 7.8 11.3 7.8 Q16.5 7.8 16.5 13.5 Z" fill="#2f8fd0"/>
 <circle cx="11.3" cy="4" r="3.1" fill="#a87050"/><path d="M8.1 3.6 Q8.3 0.4 11.3 0.5 Q14.4 0.6 14.5 3.6 Q13 2 11.3 2.2 Q9.5 2 8.1 3.6Z" fill="#2a2a2a"/>
 <path d="M0.5 14 Q0.5 8.6 5.8 8.6 Q11 8.6 11 14 Z" fill="#3aa070"/>
 <circle cx="5.8" cy="5" r="3.1" fill="#b07858"/><path d="M2.6 4.6 Q2.8 1.4 5.8 1.5 Q8.9 1.6 9 4.6 Q7.5 3 5.8 3.2 Q4 3 2.6 4.6Z" fill="#2a2a2a"/>
</svg>
<div class="a" style="left:991px;top:729px;width:22px;height:23px;border:1px solid #2a6496;background:#c6e3f6"></div>
<svg class="ic" style="left:995px;top:734px" width="16" height="13" viewBox="0 0 16 13" shape-rendering="crispEdges">
 <rect x="0.5" y="0.5" width="4" height="4" fill="#fff" stroke="#a8a8a8" stroke-width="1"/><rect x="2" y="2" width="1" height="1" fill="#1a8a1a"/>
 <rect x="0.5" y="4.5" width="4" height="4" fill="#fff" stroke="#a8a8a8" stroke-width="1"/><rect x="2" y="6" width="1" height="1" fill="#e01a1a"/>
 <rect x="0.5" y="8.5" width="4" height="4" fill="#fff" stroke="#a8a8a8" stroke-width="1"/><rect x="2" y="10" width="1" height="1" fill="#1a3ad8"/>
 <path d="M6 2.5 H10 M11 2.5 H15 M6 6.5 H10 M11 6.5 H15 M6 10.5 H10 M11 10.5 H15" stroke="#505050" stroke-width="1"/>
</svg>
<svg class="ic" style="left:1017px;top:734px" width="14" height="12" viewBox="0 0 14 12">
 <defs><linearGradient id="gsky" x1="0" y1="0" x2="0" y2="1"><stop offset="0" stop-color="#2a7ae0"/><stop offset="1" stop-color="#bfe4ff"/></linearGradient></defs>
 <rect x="0.5" y="0.5" width="13" height="11" rx="1" fill="#fff" stroke="#7f8fa8" stroke-width="1"/>
 <rect x="2" y="2" width="10" height="8" fill="url(#gsky)"/>
 <path d="M2 6.5 Q6 4.8 12 7.8 V10 H2 Z" fill="#2a6a40"/>
 <path d="M7 3 Q9 2.5 11 3.5 L11 5 Q9 4.5 7 5 Z" fill="#fff" opacity="0.8"/>
</svg>


<!-- Server manager -->
<div class="a" style="left:1047px;top:0;width:233px;height:23px;background:#c6d7dd"></div>
<div class="a" style="left:1047px;top:23px;width:233px;height:62px;background:#424242"></div>
<div class="a" style="left:1047px;top:85px;width:233px;height:675px;background:#f7f7f7"></div>
<div class="a" style="left:1279px;top:0;width:1px;height:760px;background:#2a2a2a"></div>
<div class="a" style="left:1177px;top:0;width:29px;height:20px;border:1px solid #555;border-top:0"></div>
<div class="a" style="left:1186px;top:10px;width:10px;height:3px;background:#000"></div>
<div class="a" style="left:1205px;top:0;width:27px;height:20px;border:1px solid #555;border-top:0"></div>
<svg class="ic" style="left:1212px;top:2px" width="13" height="13" viewBox="0 0 13 13"><path d="M4 2.5 V1 H11.5 V8.5 H10" fill="none" stroke="#000" stroke-width="1.4"/><rect x="2" y="3.8" width="7" height="7.4" fill="none" stroke="#000" stroke-width="2.3"/></svg>
<div class="a" style="left:1231px;top:0;width:47px;height:20px;border:1px solid #555;border-top:0"></div>
<svg class="ic" style="left:1250px;top:5px" width="9" height="8" viewBox="0 0 9 8"><path d="M0 0 H3 L4.5 2.3 L6 0 H9 L6 4 L9 8 H6 L4.5 5.7 L3 8 H0 L3 4 Z" fill="#000"/></svg>
<div class="t" style="left:1056px;top:48px;color:#f0f0f0;letter-spacing:-0.2px">Gérer</div>
<div class="t" style="left:1116px;top:48px;color:#f0f0f0;letter-spacing:-0.2px">Outils</div>
<div class="t" style="left:1165px;top:48px;color:#f0f0f0;letter-spacing:-0.1px">Afficher</div>
<div class="t" style="left:1228px;top:48px;color:#f0f0f0;letter-spacing:-0.2px">Aide</div>
<div class="a" style="left:1047px;top:142px;width:194px;height:278px;background:#fff;border:1px solid #a0a0a0;border-left:0"></div>
<div class="t" style="left:1174px;top:385px;color:#444;letter-spacing:-0.1px">Masquer</div>
<div class="a" style="left:1263px;top:86px;width:16px;height:674px;background:#fff;border-left:1px solid #c4c4c4"></div>
<div class="a" style="left:1263px;top:86px;width:16px;height:17px;border:1px solid #c8c8c8;border-right:0;background:#fff"></div>
<svg class="ic" style="left:1268px;top:91px" width="9" height="6" viewBox="0 0 9 6"><path d="M1 5 L4.5 1.5 L8 5" fill="none" stroke="#606060" stroke-width="1.4"/></svg>
<div class="a" style="left:1263px;top:102px;width:16px;height:351px;border:1px solid #a6a6a6;border-right:0;background:#dcdcdc"></div>
<div class="a" style="left:1267px;top:274px;width:8px;height:1.6px;background:#606060"></div>
<div class="a" style="left:1267px;top:277px;width:8px;height:1.6px;background:#606060"></div>
<div class="a" style="left:1267px;top:280px;width:8px;height:1.6px;background:#606060"></div>
<div class="a" style="left:1263px;top:743px;width:16px;height:17px;border:1px solid #c8c8c8;border-right:0;background:#fff"></div>
<svg class="ic" style="left:1268px;top:749px" width="9" height="6" viewBox="0 0 9 6"><path d="M1 1 L4.5 4.5 L8 1" fill="none" stroke="#606060" stroke-width="1.4"/></svg>


<!-- taskbar -->
<div class="a" style="left:0;top:759px;width:1280px;height:2px;background:#2a2a2a"></div>
<div class="a" style="left:0;top:799px;width:1280px;height:1px;background:#1a1a1a"></div>
<div class="a" style="left:0;top:761px;width:1px;height:38px;background:#555"></div>
<div class="a" style="left:51px;top:761px;width:1px;height:38px;background:#3a8aa8"></div>
<div class="a" style="left:52px;top:761px;width:58px;height:38px;background:#78d0ec"></div>
<div class="a" style="left:110px;top:761px;width:1px;height:38px;background:#3a8aa8"></div>
<div class="a" style="left:175px;top:761px;width:1px;height:38px;background:#3a8aa8"></div>
<div class="a" style="left:176px;top:761px;width:58px;height:38px;background:#a0dcf1"></div>
<div class="a" style="left:234px;top:761px;width:1px;height:38px;background:#3a8aa8"></div>
<svg class="ic" style="left:11px;top:766px" width="28" height="26" viewBox="0 0 28 26"><path d="M0.5 3.6 L11.8 2 V12.2 H0.5 Z M12.8 1.8 L27.5 0 V12.2 H12.8 Z M0.5 13.2 H11.8 V23.6 L0.5 22.2 Z M12.8 13.2 H27.5 V26 L12.8 24.1 Z" fill="#fff"/></svg>
<svg class="ic" style="left:64px;top:764px" width="34" height="32" viewBox="0 0 34 32">
 <rect x="1" y="0.5" width="16" height="29" rx="1" fill="#fff"/>
 <rect x="2" y="1.5" width="14" height="6" fill="#1f86d8"/><rect x="2" y="8.8" width="14" height="19.7" fill="#1f86d8"/>
 <rect x="15" y="15" width="9" height="4" rx="1.5" fill="#fff"/><rect x="16.2" y="16.2" width="6.6" height="3" fill="#7a96aa"/>
 <rect x="6" y="17.5" width="27" height="14.2" rx="2" fill="#fff"/><rect x="7.3" y="18.8" width="24.4" height="11.6" rx="1" fill="#7a96aa"/>
 <path d="M9 22.5 H30" stroke="#fff" stroke-width="1.3"/><circle cx="12" cy="22.5" r="1.3" fill="#fff"/><circle cx="27" cy="22.5" r="1.3" fill="#fff"/>
</svg>
<svg class="ic" style="left:130px;top:769px" width="28" height="22" viewBox="0 0 28 22">
 <defs><linearGradient id="gps" x1="0" y1="0" x2="0" y2="1"><stop offset="0" stop-color="#6fb4ea"/><stop offset="0.45" stop-color="#3d8ad6"/><stop offset="0.5" stop-color="#2a74c8"/><stop offset="1" stop-color="#1f5fae"/></linearGradient></defs>
 <path d="M4.8 0.6 H26.2 Q27.5 0.6 27.3 1.8 L24.3 20.2 Q24.1 21.4 22.9 21.4 H1.6 Q0.4 21.4 0.6 20.2 L3.5 1.8 Q3.7 0.6 4.8 0.6 Z" fill="url(#gps)" stroke="#174f8f" stroke-width="0.9"/>
 <path d="M8.2 3.8 L14.8 10.2 L7.2 16.2" fill="none" stroke="#fff" stroke-width="2.1" stroke-linecap="round" stroke-linejoin="round"/>
 <rect x="12.8" y="15.8" width="6.2" height="1.9" rx="0.9" fill="#e8f2fa"/>
</svg>
<svg class="ic" style="left:189px;top:766px" width="33" height="31" viewBox="0 0 33 31">
 <defs><linearGradient id="gex" x1="0" y1="0" x2="1" y2="1"><stop offset="0" stop-color="#fff9da"/><stop offset="1" stop-color="#efcf72"/></linearGradient>
 <linearGradient id="gbl" x1="0" y1="0" x2="0" y2="1"><stop offset="0" stop-color="#d8f0ff"/><stop offset="1" stop-color="#5aaee8"/></linearGradient></defs>
 <path d="M1.5 9 V3.5 Q1.5 1.5 3.5 1.5 H14 Q16 1.5 16 3.5 V9 Z" fill="#f3dc94" stroke="#d2ae5a" stroke-width="0.8"/>
 <path d="M10.5 10 V5.5 Q10.5 3.8 12.3 3.8 H23.5 Q25.5 3.8 25.5 5.5 V10 Z" fill="#f3dc94" stroke="#d2ae5a" stroke-width="0.8"/>
 <path d="M17.5 11 V7.8 Q17.5 6 19.3 6 H29.7 Q31.5 6 31.5 7.8 V11 Z" fill="#f3dc94" stroke="#d2ae5a" stroke-width="0.8"/>
 <rect x="3.5" y="2.5" width="9" height="3" fill="#fff"/><rect x="3.8" y="2.6" width="2.6" height="2" fill="#12b012"/>
 <rect x="11.5" y="5" width="9" height="3" fill="#fff"/><rect x="11.8" y="5.1" width="2.6" height="2" fill="#d82020"/>
 <rect x="19.5" y="7.2" width="9" height="3" fill="#fff"/><rect x="19.8" y="7.3" width="2.6" height="2" fill="#1a8ae8"/>
 <rect x="0.6" y="9.5" width="31.8" height="18" rx="1" fill="url(#gex)" stroke="#d4ac58" stroke-width="0.9"/>
 <path d="M4.5 29.5 V19 Q4.5 17.3 6.3 17.3 H26 Q27.8 17.3 27.8 19 V29.5 H21 V23.5 H11 V29.5 Z" fill="url(#gbl)" stroke="#3a96d8" stroke-width="0.9" opacity="0.95"/>
 <path d="M6.5 11 V21 M2 18.5 L11 18.5 M3.5 15 L9 21 M9.5 15 L4 21" stroke="#fff" stroke-width="0.6" opacity="0.8"/>
 <circle cx="6.5" cy="18.5" r="1.6" fill="#fff"/>
</svg>
<svg class="ic" style="left:250px;top:767px" width="34" height="21" viewBox="0 0 34 21">
 <defs><linearGradient id="gbk" x1="0" y1="0" x2="1" y2="0"><stop offset="0" stop-color="#7a6420"/><stop offset="0.35" stop-color="#e8d070"/><stop offset="1" stop-color="#f6eaa8"/></linearGradient></defs>
 <path d="M1 10 L21.5 1.2 L32.8 3.8 L12.3 12.8 Z" fill="url(#gbk)"/>
 <path d="M7 8.2 L22 2 L29 3.8 L14 10.2 Z" fill="#fffbe0" opacity="0.85"/>
 <path d="M1 10 Q5 7.5 10 8.5 L12.3 12.8 Z" fill="#6a5018" opacity="0.8"/>
 <path d="M1 10 L12.3 12.8 L12.3 19.8 L1 16.5 Z" fill="#f2e6a6"/>
 <path d="M12.3 12.8 L32.8 3.8 L32.8 10.5 L12.3 19.8 Z" fill="#e4d690"/>
 <path d="M15 16.5 L31 9.5" stroke="#5a5030" stroke-width="1" stroke-dasharray="1.3 1.6"/>
 <path d="M1 16.5 L12.3 19.8 L32.8 10.5" fill="none" stroke="#b8a860" stroke-width="0.6"/>
</svg>
<!-- tray -->
<svg class="ic" style="left:1097px;top:772px" width="14" height="14" viewBox="0 0 14 14"><rect x="0.5" y="0.5" width="13" height="13" rx="1.5" fill="#6c6c6c" stroke="#4a4a4a" stroke-width="0.8"/><text x="7" y="9.5" font-family="Liberation Sans" font-size="7.5" font-weight="bold" fill="#fff" text-anchor="middle" letter-spacing="-0.6">vm</text></svg>
<svg class="ic" style="left:1120px;top:772px" width="17" height="17" viewBox="0 0 17 17"><rect x="3" y="0.5" width="4" height="4" fill="#c8c8c8" stroke="#888" stroke-width="0.6"/><rect x="1.5" y="4.5" width="7" height="7" fill="#6a6a6a"/><rect x="4" y="11.5" width="2" height="4" fill="#555"/><circle cx="11.8" cy="11.8" r="4.6" fill="#2aa82a"/><path d="M9.5 11.8 L11.3 13.8 L14.3 9.6" fill="none" stroke="#fff" stroke-width="1.5"/></svg>
<svg class="ic" style="left:1145px;top:773px" width="17" height="14" viewBox="0 0 17 14"><circle cx="3" cy="3" r="2.3" fill="none" stroke="#fff" stroke-width="1.3"/><path d="M3 5.3 V13" stroke="#fff" stroke-width="1.5"/><rect x="6" y="2.5" width="10" height="7" fill="none" stroke="#fff" stroke-width="1.3"/><path d="M11 9.5 V12 M7.5 12.8 H14.5" stroke="#fff" stroke-width="1.2"/><rect x="1.5" y="6" width="3" height="1" fill="#333"/></svg>
<svg class="ic" style="left:1168px;top:772px" width="17" height="17" viewBox="0 0 17 17"><path d="M1 5.5 H3.5 L7.5 1.5 V14.5 L3.5 10.5 H1 Z" fill="#e8e8e8" stroke="#999" stroke-width="0.6"/><circle cx="12" cy="11.8" r="4.6" fill="#e02a2a"/><path d="M10 9.8 L14 13.8 M14 9.8 L10 13.8" stroke="#fff" stroke-width="1.5"/></svg>
<div class="t" style="left:1219px;top:765px;color:#000;font-size:12px;letter-spacing:-0.1px">11:27</div>
<div class="t" style="left:1203px;top:782px;color:#000;font-size:12px;letter-spacing:-0.3px">25/03/2014</div>
<div class="a" style="left:1279px;top:761px;width:1px;height:38px;background:#3a3a3a"></div>


</div></body></html>
